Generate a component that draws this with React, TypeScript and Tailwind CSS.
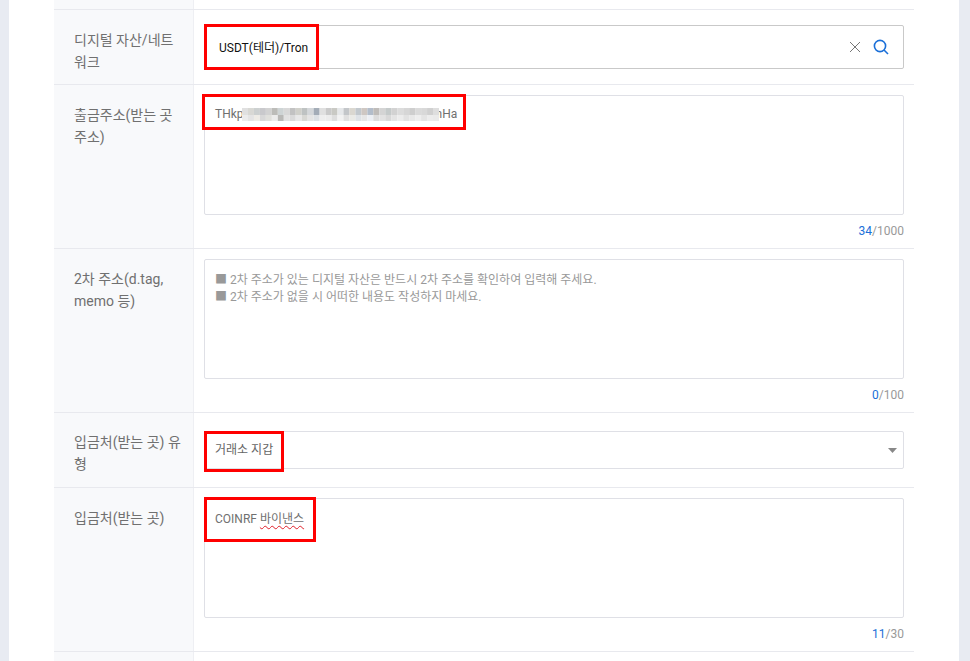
const fontStack = "font-['Roboto','Noto_Sans_CJK_KR',sans-serif]";

// pixelated part of the address
const mosaicTop = ["#e0e0e0", "#d8d8d4", "#ccd0d0", "#c9c9cc", "#d2d2d2", "#bcbcb9", "#ced4d5", "#d8d8d8", "#c2c2c2", "#d0d0ca", "#bec2c2", "#d4d7da", "#a3acb7", "#e0e0e0", "#cacaca", "#c9c9c4", "#e6e8ea", "#c3c6c9", "#dad7d0", "#c2c8cd", "#cec7c2", "#b3bdca", "#bfbcb9", "#d4d4d4", "#c5caca", "#d2d2d2", "#dcdcdc", "#d6d6d6", "#cecece", "#dadada", "#d8d8d8", "#d0d0d0", "#dedede"];
const mosaicBottom = ["#ececec", "#e4e4e4", "#eeece6", "#d8d8d8", "#e0e0dc", "#ececec", "#b9b9b7", "#e2e2e2", "#dadada", "#e8e8e8", "#d8d8d4", "#e4e4e4", "#dce0e4", "#eeeeee", "#ececec", "#dedede", "#f2f2f2", "#e0e0e0", "#eaeae6", "#dee2e6", "#e6e6e6", "#eceff4", "#dcdcdc", "#e2e2e2", "#d8d8d8", "#e4e4e4", "#ececec", "#e2e2e2", "#e8e8e8", "#eeeeee", "#e4e4e4", "#ececec", "#eaeaea"];

function Mosaic() {
  return (
    <svg width="197" height="13" viewBox="0 0 198 13" className="relative z-10 -ml-[2px] shrink-0" aria-hidden="true">
      {mosaicTop.map((c, i) => (
        <rect key={i} x={i * 6} y={0} width={6} height={7} fill={c} />
      ))}
      {mosaicBottom.map((c, i) => (
        <rect key={i} x={i * 6} y={7} width={6} height={6} fill={c} />
      ))}
    </svg>
  );
}

function RedBox({ className }: { className: string }) {
  return <div className={`absolute z-20 border-[3px] border-[#ff0000] pointer-events-none ${className}`} />;
}

function Row({ label, className, children }: { label?: React.ReactNode; className?: string; children?: React.ReactNode }) {
  return (
    <div className="flex border-b border-[#e8e9ee]">
      <div className={`w-[140px] shrink-0 bg-[#f8f9fb] border-r border-[#eeeff3] pl-5 pr-2 text-sm leading-[22px] text-[#707070] ${className}`}>
        {label}
      </div>
      <div className="flex-1 min-w-0 pl-[10px] pr-[10px]">{children}</div>
    </div>
  );
}

function Counter({ value, max }: { value: number; max: number }) {
  return (
    <div className="h-[33px] pt-[8px] text-right text-xs leading-[16px] text-[#999]">
      <span className="text-[#1a6fd8]">{value}</span>/{max}
    </div>
  );
}

function TextBox({ children }: { children?: React.ReactNode }) {
  return (
    <div className="relative h-[120px] rounded-[2px] border border-[#dfe0e6] px-[10px] py-[8px] text-xs leading-[17px] text-[#707070]">
      {children}
    </div>
  );
}

export default function App() {
  return (
    <div className={`h-[661px] w-[970px] overflow-hidden bg-[#e8ebf2] pl-[9px] pr-[11px] ${fontStack}`}>
      <div className="h-full bg-white px-[45px]">
        <div className="flex h-[10px] border-b border-[#e8e9ee]">
          <div className="w-[140px] shrink-0 bg-[#f8f9fb] border-r border-[#eeeff3]" />
        </div>

        <Row className="pt-[19px] h-[74px]" label="디지털 자산/네트워크">
          <div className="relative mt-[15px] flex h-[44px] items-center rounded-[2px] border border-[#c9c9c9] pl-[14px] pr-[14px] text-xs text-[#111]">
            <span className="flex-1 pt-[2px]">USDT(테더)/Tron</span>
            <svg width="12" height="12" viewBox="0 0 12 12" className="mr-[12px]" fill="none" stroke="#777" strokeWidth="1">
              <path d="M1 1l10 10M11 1L1 11" />
            </svg>
            <svg width="16" height="16" viewBox="0 0 16 16" fill="none" stroke="#1a6fd8" strokeWidth="1.6">
              <circle cx="7" cy="7" r="5.6" />
              <path d="M11 11l4 4" />
            </svg>
            <RedBox className="-left-px -top-[2px] h-[46px] w-[115px]" />
          </div>
        </Row>

        <Row className="pt-[19px] h-[163px]" label="출금주소(받는 곳 주소)">
          <div className="pt-[10px]">
            <TextBox>
              <div className="flex items-center pt-[2px]">
                <span>THkp</span>
                <Mosaic />
                <span className="-ml-[3px]">nHa</span>
              </div>
              <RedBox className="-left-[3px] -top-[2px] h-[36px] w-[264px]" />
            </TextBox>
            <Counter value={34} max={1000} />
          </div>
        </Row>

        <Row className="pt-[19px] h-[163px]" label="2차 주소(d.tag, memo 등)">
          <div className="pt-[10px]">
            <TextBox>
              <div className="pt-[4px] text-[#999]">
                <p>■ 2차 주소가 있는 디지털 자산은 반드시 2차 주소를 확인하여 입력해 주세요.</p>
                <p>■ 2차 주소가 없을 시 어떠한 내용도 작성하지 마세요.</p>
              </div>
            </TextBox>
            <Counter value={0} max={100} />
          </div>
        </Row>

        <Row className="pt-[18px] h-[74px]" label="입금처(받는 곳) 유형">
          <div className="relative mt-[18px] flex h-[38px] items-center justify-between rounded-[2px] border border-[#dfe0e6] pl-[10px] pr-[6px] text-xs text-[#666]">
            <span>거래소 지갑</span>
            <svg width="9" height="5" viewBox="0 0 9 5" fill="#888">
              <path d="M0 0h9L4.5 5z" />
            </svg>
            <RedBox className="-left-px -top-px h-[41px] w-[80px]" />
          </div>
        </Row>

        <Row className="pt-[19px] h-[163px]" label="입금처(받는 곳)">
          <div className="pt-[10px]">
            <TextBox>
              <div className="pt-[4px]">
                COINRF{" "}
                <span className="underline decoration-wavy decoration-[#e0202a] decoration-1 underline-offset-2">바이낸스</span>
              </div>
              <RedBox className="-left-px -top-[2px] h-[45px] w-[112px]" />
            </TextBox>
            <Counter value={11} max={30} />
          </div>
        </Row>

        <Row className="h-[20px]" />
      </div>
    </div>
  );
}
